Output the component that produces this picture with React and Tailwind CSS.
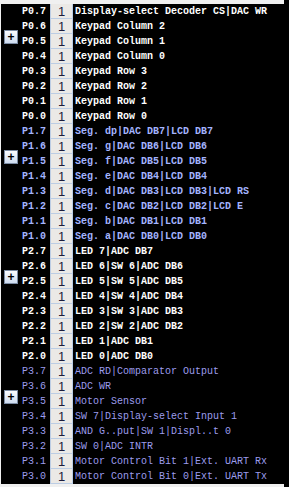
import React from 'react';

const groups = [
  {
    color: 'text-white font-bold',
    rows: [
      ['P0.7', 'Display-select Decoder CS|DAC WR'],
      ['P0.6', 'Keypad Column 2'],
      ['P0.5', 'Keypad Column 1'],
      ['P0.4', 'Keypad Column 0'],
      ['P0.3', 'Keypad Row 3'],
      ['P0.2', 'Keypad Row 2'],
      ['P0.1', 'Keypad Row 1'],
      ['P0.0', 'Keypad Row 0'],
    ],
  },
  {
    color: 'text-[#a4b4ff] font-bold',
    rows: [
      ['P1.7', 'Seg. dp|DAC DB7|LCD DB7'],
      ['P1.6', 'Seg. g|DAC DB6|LCD DB6'],
      ['P1.5', 'Seg. f|DAC DB5|LCD DB5'],
      ['P1.4', 'Seg. e|DAC DB4|LCD DB4'],
      ['P1.3', 'Seg. d|DAC DB3|LCD DB3|LCD RS'],
      ['P1.2', 'Seg. c|DAC DB2|LCD DB2|LCD E'],
      ['P1.1', 'Seg. b|DAC DB1|LCD DB1'],
      ['P1.0', 'Seg. a|DAC DB0|LCD DB0'],
    ],
  },
  {
    color: 'text-white font-bold',
    rows: [
      ['P2.7', 'LED 7|ADC DB7'],
      ['P2.6', 'LED 6|SW 6|ADC DB6'],
      ['P2.5', 'LED 5|SW 5|ADC DB5'],
      ['P2.4', 'LED 4|SW 4|ADC DB4'],
      ['P2.3', 'LED 3|SW 3|ADC DB3'],
      ['P2.2', 'LED 2|SW 2|ADC DB2'],
      ['P2.1', 'LED 1|ADC DB1'],
      ['P2.0', 'LED 0|ADC DB0'],
    ],
  },
  {
    color: 'text-[#9c9cec] font-normal',
    rows: [
      ['P3.7', 'ADC RD|Comparator Output'],
      ['P3.6', 'ADC WR'],
      ['P3.5', 'Motor Sensor'],
      ['P3.4', 'SW 7|Display-select Input 1'],
      ['P3.3', 'AND G..put|SW 1|Displ..t 0'],
      ['P3.2', 'SW 0|ADC INTR'],
      ['P3.1', 'Motor Control Bit 1|Ext. UART Rx'],
      ['P3.0', 'Motor Control Bit 0|Ext. UART Tx'],
    ],
  },
];

function Row({ pin, desc, color }) {
  return (
    <div className="flex h-[15px] items-center">
      <div className={`w-[49px] shrink-0 pr-[4px] text-right whitespace-pre ${color}`}>{pin}</div>
      <div className="flex h-[15px] w-[23px] shrink-0 items-center justify-center border-b border-l border-r border-[#bccde4] bg-[#ebe9e6] font-['Liberation_Sans',sans-serif] text-[13px] leading-none text-[#1c1c3c]">
        1
      </div>
      <div className={`pl-[2px] whitespace-pre ${color}`}>{desc}</div>
    </div>
  );
}

export default function App() {
  return (
    <div className="flex h-[487px] w-[289px] overflow-hidden bg-[#f0f0f0] font-['Liberation_Mono',monospace] text-[10px] leading-[15px]">
      <div className="flex w-[284px] flex-col">
        <div className="h-[4px] shrink-0" />
        <div className="ml-[1px] flex flex-col bg-black">
          {groups.map((g, gi) => (
            <div key={gi} className="relative">
              {g.rows.map(([pin, desc]) => (
                <Row key={pin} pin={pin} desc={desc} color={g.color} />
              ))}
              <div className="absolute left-[3px] top-[26px] flex h-[14px] w-[14px] items-center justify-center border border-[#7c8ca4] bg-gradient-to-b from-[#fbfcff] to-[#cfdcf0] font-['Liberation_Sans',sans-serif] text-[12px] font-bold leading-none text-black">
                +
              </div>
            </div>
          ))}
        </div>
      </div>
      <div className="w-[5px] shrink-0 bg-black" />
    </div>
  );
}
